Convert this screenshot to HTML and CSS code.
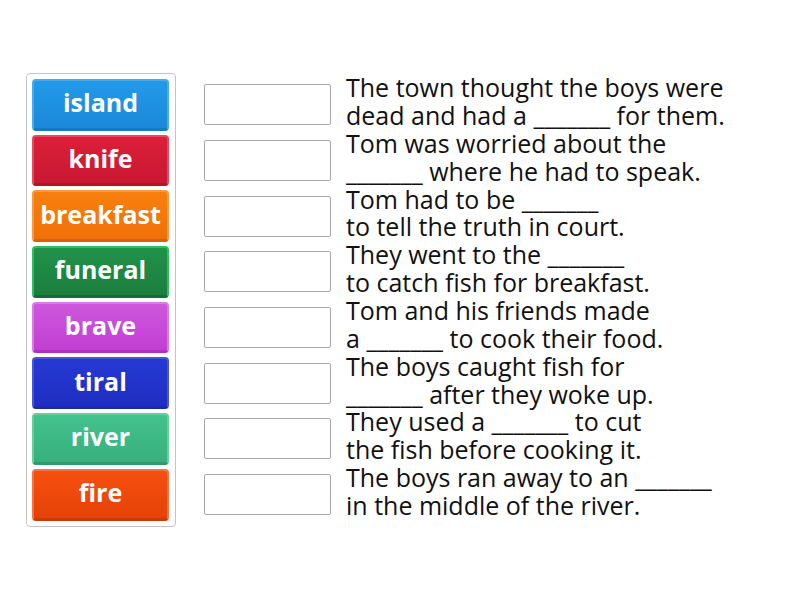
FILE: index.html
```html
<!DOCTYPE html>
<html>
<head>
<meta charset="utf-8">
<link rel="stylesheet" href="styles.css">
</head>
<body>
<div class="page">
  <div class="bank">
    <div class="tile c-blue">island</div>
    <div class="tile c-red">knife</div>
    <div class="tile c-orange">breakfast</div>
    <div class="tile c-green">funeral</div>
    <div class="tile c-purple">brave</div>
    <div class="tile c-navy">tiral</div>
    <div class="tile c-mint">river</div>
    <div class="tile c-fire">fire</div>
  </div>
  <div class="questions">
    <div class="row"><div class="slot"></div><div class="text">The town thought the boys were<br>dead and had a _______ for them.</div></div>
    <div class="row"><div class="slot"></div><div class="text">Tom was worried about the<br>_______ where he had to speak.</div></div>
    <div class="row"><div class="slot"></div><div class="text">Tom had to be _______<br>to tell the truth in court.</div></div>
    <div class="row"><div class="slot"></div><div class="text">They went to the _______<br>to catch fish for breakfast.</div></div>
    <div class="row"><div class="slot"></div><div class="text">Tom and his friends made<br>a _______ to cook their food.</div></div>
    <div class="row"><div class="slot"></div><div class="text">The boys caught fish for<br>_______ after they woke up.</div></div>
    <div class="row"><div class="slot"></div><div class="text">They used a _______ to cut<br>the fish before cooking it.</div></div>
    <div class="row"><div class="slot"></div><div class="text">The boys ran away to an _______<br>in the middle of the river.</div></div>
  </div>
</div>
</body>
</html>
```
FILE: styles.css
```css
html, body {
  margin: 0;
  padding: 0;
  background: #fff;
}
body {
  width: 800px;
  height: 600px;
  overflow: hidden;
  font-family: "Open Sans", "Liberation Sans", sans-serif;
}
.page {
  display: flex;
  align-items: flex-start;
  padding: 73px 0 0 26px;
}
.bank {
  box-sizing: border-box;
  width: 150px;
  border: 1px solid #c4c4c4;
  border-radius: 4px;
  padding: 5px 6px 5px 5px;
  display: flex;
  flex-direction: column;
  gap: 4px;
}
.tile {
  box-sizing: border-box;
  height: 51.7px;
  border-radius: 4px;
  color: #fff;
  font-weight: 700;
  font-size: 25px;
  display: flex;
  align-items: center;
  justify-content: center;
  padding-bottom: 4px;
  border: 2px solid rgba(255,255,255,0.14);
  border-bottom: 3px solid rgba(0,0,0,0.18);
}
.c-blue   { background-color: #1f92e4; background-image: linear-gradient(#229ae9, #1b88d9); }
.c-red    { background-color: #d81c36; background-image: linear-gradient(#dc1f38, #c91832); }
.c-orange { background-color: #f57a0b; background-image: linear-gradient(#f8800d, #ef7008); }
.c-green  { background-color: #1f8a45; background-image: linear-gradient(#219248, #1b7e3f); }
.c-purple { background-color: #c84cd8; background-image: linear-gradient(#cd57dd, #c13fd2); }
.c-navy   { background-color: #2234cc; background-image: linear-gradient(#2539d2, #1f2ec2); }
.c-mint   { background-color: #3ebc87; background-image: linear-gradient(#43c28c, #38b07e); }
.c-fire   { background-color: #f24a0c; background-image: linear-gradient(#f5500f, #e54208); }

.c-blue   { border-color: #4aaaf0 #4aaaf0 #1779c4; }
.c-red    { border-color: #e44b60 #e44b60 #b3142b; }
.c-orange { border-color: #f99a40 #f99a40 #d86205; }
.c-green  { border-color: #2fbf60 #2fbf60 #176b35; }
.c-purple { border-color: #d87ce4 #d87ce4 #ad33be; }
.c-navy   { border-color: #4556dc #4556dc #1b29ad; }
.c-mint   { border-color: #66cfa2 #66cfa2 #2f9b6d; }
.c-fire   { border-color: #f77340 #f77340 #cc3a06; }

.questions {
  margin-top: 4.15px;
  margin-left: 28px;
  display: flex;
  flex-direction: column;
}
.row {
  height: 55.71px;
  display: flex;
  align-items: center;
}
.slot {
  box-sizing: border-box;
  width: 127px;
  height: 41px;
  border: 1px solid #a9a9a9;
  border-radius: 2px;
  background: #fff;
  margin-top: -0.5px;
  flex: none;
}
.text {
  margin-left: 15px;
  margin-bottom: 6px;
  font-size: 25px;
  line-height: 27.85px;
  color: #111;
  white-space: nowrap;
}
```
